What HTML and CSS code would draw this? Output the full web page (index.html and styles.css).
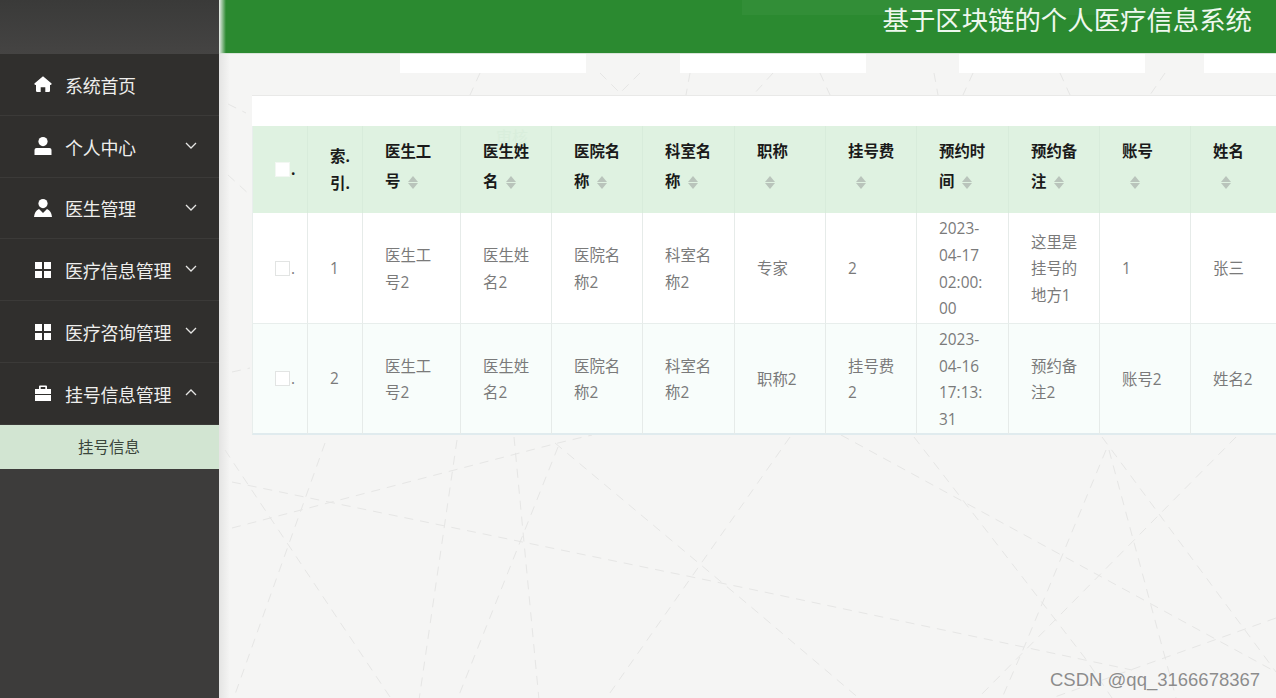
FILE: index.html
```html
<!DOCTYPE html>
<html lang="zh-CN">
<head>
<meta charset="utf-8">
<title>基于区块链的个人医疗信息系统</title>
<link rel="stylesheet" href="styles.css">
</head>
<body>
<div class="app">
  <aside class="sidebar">
    <div class="brand"></div>
    <nav class="menu">
      <div class="item">
        <svg class="icon" viewBox="0 0 18 16"><path d="M9 0.3 L17.6 7.6 Q18 9 16.4 9 H16 V14.8 Q16 16 14.8 16 H11.3 V11.2 H6.7 V16 H3.2 Q2 16 2 14.8 V9 H1.6 Q0 9 0.4 7.6 Z"/></svg>
        <span class="label">系统首页</span>
      </div>
      <div class="item">
        <svg class="icon" viewBox="0 0 18 18"><circle cx="9" cy="4.6" r="4.6"/><path d="M2.5 11 H15.5 Q17.5 11 17.5 13 V18 H0.5 V13 Q0.5 11 2.5 11 Z"/></svg>
        <span class="label">个人中心</span>
        <svg class="chev" viewBox="0 0 12 7"><path d="M1 1 L6 6 L11 1"/></svg>
      </div>
      <div class="item">
        <svg class="icon" viewBox="0 0 18 18"><circle cx="9" cy="4.6" r="4.6"/><path d="M5 10 L9 14 L13 10 Q17.5 12 18 18 H0 Q0.5 12 5 10 Z"/></svg>
        <span class="label">医生管理</span>
        <svg class="chev" viewBox="0 0 12 7"><path d="M1 1 L6 6 L11 1"/></svg>
      </div>
      <div class="item">
        <svg class="icon" viewBox="0 0 18 18"><path d="M1 1 H8 V8 H1 Z M10 1 H17 V8 H10 Z M1 10 H8 V17 H1 Z M10 10 H17 V17 H10 Z"/></svg>
        <span class="label">医疗信息管理</span>
        <svg class="chev" viewBox="0 0 12 7"><path d="M1 1 L6 6 L11 1"/></svg>
      </div>
      <div class="item">
        <svg class="icon" viewBox="0 0 18 18"><path d="M1 1 H8 V8 H1 Z M10 1 H17 V8 H10 Z M1 10 H8 V17 H1 Z M10 10 H17 V17 H10 Z"/></svg>
        <span class="label">医疗咨询管理</span>
        <svg class="chev" viewBox="0 0 12 7"><path d="M1 1 L6 6 L11 1"/></svg>
      </div>
      <div class="item">
        <svg class="icon" viewBox="0 0 18 18"><path d="M6 1.5 H12 Q13 1.5 13 2.5 V5 H17 V10 H1 V5 H5 V2.5 Q5 1.5 6 1.5 Z M6.7 3 V5 H11.3 V3 Z M1 11 H17 V17 H1 Z"/></svg>
        <span class="label">挂号信息管理</span>
        <svg class="chev" viewBox="0 0 12 7"><path d="M1 6 L6 1 L11 6"/></svg>
      </div>
      <div class="subitem">挂号信息</div>
    </nav>
  </aside>

  <main class="main">
    <svg class="lines" viewBox="219 0 1057 698">
      <path d="M232 482 L750 589 L1132 670"/>
      <path d="M232 528 L558 443 L592 435"/>
      <path d="M225 450 L392 700"/>
      <path d="M325 443 L233 700"/>
      <path d="M457 440 L419 700"/>
      <path d="M558 447 L457 700"/>
      <path d="M514 437 L539 700"/>
      <path d="M555 443 L750 606 L861 700"/>
      <path d="M790 437 L605 700"/>
      <path d="M841 435 L1276 672"/>
      <path d="M914 437 L1085 658 L1112 698"/>
      <path d="M1106 450 L1025 645 L1002 698"/>
      <path d="M1236 437 L978 698"/>
      <path d="M1102 437 L1276 672"/>
      <path d="M1109 450 L1176 698"/>
      <path d="M1276 618 L1052 698"/>
      <path d="M690 73 L686 95 M773 73 L753 95 M820 73 L830 95 M934 73 L938 95 M973 73 L963 95 M1165 73 L1150 95"/>
      <path d="M600 73 L622 95 M640 73 L618 95 M480 73 L470 95 M1060 73 L1070 95"/>
      <path d="M228 104 L246 113 M228 175 L250 195 M232 372 L250 368"/>
    </svg>

    <header class="topbar">
      <div class="topbar-glow"></div>
      <h1 class="title">基于区块链的个人医疗信息系统</h1>
    </header>

    <div class="stubs">
      <div class="stub"></div>
      <div class="stub"></div>
      <div class="stub"></div>
      <div class="stub stub-last"></div>
    </div>

    <section class="panel">
      <div class="panel-top"></div>
      <div class="table-wrap">
        <table class="grid">
          <colgroup>
            <col class="c56"><col class="c55"><col class="c98"><col class="c91"><col class="c91"><col class="c92">
            <col class="c91"><col class="c91"><col class="c92"><col class="c91"><col class="c91"><col class="c91">
          </colgroup>
          <thead>
            <tr>
              <th class="tight first"><span class="check check-head"></span>.</th>
              <th class="tight index">索.<br>引.</th>
              <th>医生工号<span class="sort"><i class="up"></i><i class="down"></i></span></th>
              <th>医生姓名<span class="sort"><i class="up"></i><i class="down"></i></span></th>
              <th>医院名称<span class="sort"><i class="up"></i><i class="down"></i></span></th>
              <th>科室名称<span class="sort"><i class="up"></i><i class="down"></i></span></th>
              <th>职称<span class="sort"><i class="up"></i><i class="down"></i></span></th>
              <th>挂号费<span class="sort"><i class="up"></i><i class="down"></i></span></th>
              <th>预约时间<span class="sort"><i class="up"></i><i class="down"></i></span></th>
              <th>预约备注<span class="sort"><i class="up"></i><i class="down"></i></span></th>
              <th>账号<span class="sort"><i class="up"></i><i class="down"></i></span></th>
              <th>姓名<span class="sort"><i class="up"></i><i class="down"></i></span></th>
            </tr>
          </thead>
          <tbody>
            <tr>
              <td class="tight first"><span class="check"></span>.</td>
              <td class="tight index">1</td>
              <td>医生工号2</td>
              <td>医生姓名2</td>
              <td>医院名称2</td>
              <td>科室名称2</td>
              <td>专家</td>
              <td>2</td>
              <td>2023-<br>04-17<br>02:00:<br>00</td>
              <td>这里是挂号的地方1</td>
              <td>1</td>
              <td>张三</td>
            </tr>
            <tr class="alt">
              <td class="tight first"><span class="check"></span>.</td>
              <td class="tight index">2</td>
              <td>医生工号2</td>
              <td>医生姓名2</td>
              <td>医院名称2</td>
              <td>科室名称2</td>
              <td>职称2</td>
              <td>挂号费2</td>
              <td>2023-<br>04-16<br>17:13:<br>31</td>
              <td>预约备注2</td>
              <td>账号2</td>
              <td>姓名2</td>
            </tr>
          </tbody>
        </table>
        <span class="ghost">审核</span>
      </div>
    </section>

    <div class="watermark">CSDN @qq_3166678367</div>
  </main>
</div>
</body>
</html>
```

FILE: styles.css
```css
* { box-sizing: border-box; }
html, body { margin: 0; height: 100%; overflow: hidden; }
body {
  font-family: "Open Sans", "Noto Sans CJK SC", sans-serif;
  background: #f5f5f4;
}
.app { display: flex; width: 1276px; height: 698px; }

/* Sidebar */
.sidebar {
  width: 219px;
  flex: none;
  display: flex;
  flex-direction: column;
  background: #3d3c3b;
}
.brand {
  height: 54px;
  background: linear-gradient(#3a3a39, #454443);
}
.menu { display: flex; flex-direction: column; }
.item {
  height: 61.8px;
  display: flex;
  align-items: center;
  padding-left: 34px;
  position: relative;
  background: #302f2d;
  border-bottom: 1px solid #3b3a38;
  color: #eeeeec;
  font-size: 18px;
  letter-spacing: -0.3px;
}
.icon { width: 18px; height: 18px; fill: #fff; flex: none; }
.label { margin-left: 13px; padding-top: 1px; }
.chev {
  position: absolute;
  left: 185px;
  top: 26px;
  width: 12px;
  height: 7px;
  fill: none;
  stroke: #e6e6e4;
  stroke-width: 1.3;
}
.subitem {
  height: 44px;
  display: flex;
  align-items: center;
  padding-left: 78px;
  background: #d2e5d2;
  color: #3b463c;
  font-size: 15.5px;
}

/* Main */
.main {
  flex: 1;
  min-width: 0;
  position: relative;
  isolation: isolate;
  overflow: hidden;
  background: linear-gradient(to right, #e4e4e3, #f5f5f4 11px);
}
.lines {
  position: absolute;
  left: 0;
  top: 0;
  width: 1057px;
  height: 698px;
  z-index: -1;
  fill: none;
  stroke: #e6e6e5;
  stroke-width: 1;
  stroke-dasharray: 9 7;
}
.topbar {
  height: 54px;
  display: flex;
  justify-content: flex-end;
  align-items: center;
  padding: 0 24px 13px 0;
  position: relative;
  background: linear-gradient(to right, #eef0ee, #2b8a30 7px);
  border-bottom: 1px solid #d9e4d9;
}
.topbar-glow {
  position: absolute;
  left: 523px;
  top: 0;
  width: 418px;
  height: 15px;
  background: #328e37;
}
.title {
  position: relative;
  margin: 0;
  font-size: 26.4px;
  font-weight: 400;
  line-height: 40px;
  color: #eef8ee;
  white-space: nowrap;
}

.stubs {
  display: flex;
  gap: 94px;
  height: 19px;
  padding-left: 181px;
}
.stub { flex: none; width: 186px; background: #fff; }
.stub:nth-child(2) { margin-left: -0.5px; }
.stub:nth-child(3) { margin-left: -0.5px; }
.stub-last { margin-left: -35px; width: 100px; }

.panel { margin: 22px 0 0 33px; }
.panel-top {
  height: 31px;
  background: #fff;
  border-top: 1px solid #e9e9e8;
}
.table-wrap { position: relative; }
.ghost {
  position: absolute;
  left: 244px;
  top: 4px;
  font-size: 16px;
  line-height: 15px;
  color: #d9eedc;
}
.grid {
  width: 1030px;
  table-layout: fixed;
  border-collapse: separate;
  border-spacing: 0;
  font-size: 15.4px;
}
.c56 { width: 56px; }
.c55 { width: 55px; }
.c98 { width: 98px; }
.c91 { width: 91px; }
.c92 { width: 92px; }

th, td {
  padding: 0 18px 0 22px;
  text-align: left;
  vertical-align: middle;
  border-right: 1px solid #e6ebe9;
  word-break: break-all;
}
thead tr { height: 87px; }
th {
  height: 87px;
  padding-bottom: 5px;
  font-weight: 700;
  line-height: 30px;
  color: #1a1a1a;
  background: #dff2e1;
  border-right-color: #d8ecdb;
}
td {
  height: 111px;
  padding-top: 3px;
  line-height: 26.6px;
  color: #7a7a7a;
  background: #fff;
  border-bottom: 1px solid #e8eeec;
}
td.first, th.first { border-left: 1px solid #e8eeec; }
.alt td { background: #f8fdfb; border-bottom: 2px solid #e0ebee; }
th.tight, td.tight { padding: 0; }
td.tight { padding-top: 2px; }
th.first, td.first { padding-left: 22px; }
th.index, td.index { padding-left: 22px; }
th.index { line-height: 27px; }

.check {
  display: inline-block;
  width: 15px;
  height: 15px;
  margin-right: 1px;
  vertical-align: -2px;
  background: #fff;
  border: 1px solid #e2e4e3;
}
.check-head { border-color: #f2f7f2; }

.sort {
  display: inline-flex;
  flex-direction: column;
  align-items: center;
  gap: 1px;
  width: 26px;
  height: 13px;
  vertical-align: 5px;
}
.sort i {
  width: 0;
  height: 0;
  border-left: 5px solid transparent;
  border-right: 5px solid transparent;
}
.sort .up { border-bottom: 6px solid #b9c4bb; }
.sort .down { border-top: 6px solid #b9c4bb; }

.watermark {
  position: absolute;
  left: 831px;
  top: 667px;
  font-family: "Liberation Sans", sans-serif;
  font-size: 18.5px;
  line-height: 26px;
  color: #8c8c8c;
  text-shadow: 0 0 1px #fff;
  white-space: nowrap;
}
```
